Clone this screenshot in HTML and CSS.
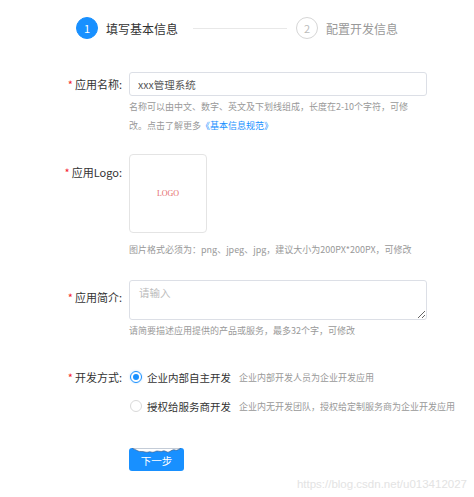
FILE: index.html
```html
<!DOCTYPE html>
<html lang="zh-CN">
  <head>
    <meta charset="UTF-8" />
    <meta name="viewport" content="width=device-width, initial-scale=1.0" />
    <title>创建应用</title>
    <link rel="stylesheet" href="styles.css">
  </head>
  <body>
    <div class="steps">
      <span class="step-num active">1</span>
      <span class="step-title active">填写基本信息</span>
      <span class="step-line"></span>
      <span class="step-num">2</span>
      <span class="step-title">配置开发信息</span>
    </div>

    <form class="app-form">
      <div class="form-row">
        <label class="form-label"><i class="req">*</i>应用名称:</label>
        <div class="form-body">
          <input class="text-input" type="text" value="xxx管理系统" />
          <p class="help help-name">
            名称可以由中文、数字、英文及下划线组成，长度在2-10个字符，可修改。点击了解更多<a href="#" class="link">《基本信息规范》</a>
          </p>
        </div>
      </div>

      <div class="form-row row-logo">
        <label class="form-label label-logo"><i class="req">*</i>应用Logo:</label>
        <div class="form-body">
          <div class="logo-box"><span class="logo-text">LOGO</span></div>
          <p class="help help-logo">图片格式必须为：png、jpeg、jpg，建议大小为200PX*200PX，可修改</p>
        </div>
      </div>

      <div class="form-row row-desc">
        <label class="form-label label-desc"><i class="req">*</i>应用简介:</label>
        <div class="form-body">
          <textarea class="text-area" placeholder="请输入"></textarea>
          <p class="help">请简要描述应用提供的产品或服务，最多32个字，可修改</p>
        </div>
      </div>

      <div class="form-row row-radio">
        <label class="form-label"><i class="req">*</i>开发方式:</label>
        <div class="form-body">
          <div class="radio-row">
            <span class="radio checked"></span>
            <span class="radio-text">企业内部自主开发</span>
            <span class="radio-desc">企业内部开发人员为企业开发应用</span>
          </div>
          <div class="radio-row second">
            <span class="radio"></span>
            <span class="radio-text">授权给服务商开发</span>
            <span class="radio-desc">企业内无开发团队，授权给定制服务商为企业开发应用</span>
          </div>
        </div>
      </div>

      <div class="actions">
        <button type="button" class="next-btn">
          <svg class="btn-tear" width="55" height="6" viewBox="0 0 55 6">
            <path d="M4 0 H51 V1 C49 1 48 3 46 2 C44 1 42 3 40 4 C38 5 36 2 34 3 C32 4 30 3 28 3 C26 3 25 5 22 4 C20 3 19 5 16 4 C13 3 11 4 9 3 C7 2 6 1 4 1 Z" fill="#fff" stroke="#3b5478" stroke-width="0.6" />
          </svg>
          下一步
        </button>
      </div>
    </form>

    <div class="watermark">https://blog.csdn.net/u013412027</div>
  </body>
</html>
```

FILE: styles.css
```css
body {
  margin: 0;
  font-family: "Noto Sans CJK SC", "Noto Sans", sans-serif;
  color: #333;
  background: #fff;
}
.steps {
  display: flex;
  align-items: center;
  margin-top: 17px;
  padding-left: 76px;
  height: 22px;
}
.step-num {
  width: 20px;
  height: 20px;
  border: 1px solid #d6d6d6;
  border-radius: 50%;
  display: flex;
  align-items: center;
  justify-content: center;
  font-size: 11px;
  color: #bbb;
}
.step-num.active {
  background-color: #1890ff;
  border-color: #1890ff;
  color: #fff;
}
.step-title {
  margin-left: 8px;
  font-size: 12px;
  color: #999;
}
.step-title.active {
  color: #333;
}
.step-line {
  width: 94px;
  height: 1px;
  background-color: #e8e8e8;
  margin: 0 9px 0 15px;
}
.app-form {
  margin-top: 33px;
}
.form-row {
  display: flex;
  align-items: flex-start;
}
.form-label {
  width: 125px;
  flex-shrink: 0;
  padding-right: 3px;
  box-sizing: border-box;
  text-align: right;
  font-size: 11px;
  line-height: 24px;
  color: #333;
}
.req {
  font-style: normal;
  color: #f5222d;
  margin-right: 2px;
}
.form-body {
  width: 298px;
  margin-left: 4px;
}
.text-input {
  display: block;
  width: 100%;
  height: 24px;
  box-sizing: border-box;
  border: 1px solid #dcdfe6;
  border-radius: 3px;
  padding: 0 8px;
  font-family: inherit;
  font-size: 10.5px;
  color: #555;
  outline: none;
}
.help {
  margin: 2px 0 0;
  font-size: 9px;
  line-height: 18px;
  color: #999;
}
.help-name {
  max-width: 284px;
  margin-top: 1px;
  line-height: 19px;
}
.link {
  color: #1890ff;
  text-decoration: none;
}
.row-logo {
  margin-top: 19px;
}
.label-logo {
  padding-top: 6px;
}
.logo-box {
  width: 78px;
  height: 79px;
  box-sizing: border-box;
  border: 1px solid #e4e4e4;
  border-radius: 4px;
  display: flex;
  align-items: center;
  justify-content: center;
}
.logo-text {
  font-family: "Liberation Serif", serif;
  font-size: 8px;
  color: #e46b6b;
}
.help-logo {
  margin-top: 8px;
  white-space: nowrap;
}
.row-desc {
  margin-top: 21px;
}
.label-desc {
  padding-top: 5px;
}
.text-area {
  display: block;
  width: 100%;
  height: 40px;
  box-sizing: border-box;
  border: 1px solid #dcdfe6;
  border-radius: 3px;
  padding: 4px 9px;
  font-family: inherit;
  font-size: 10.5px;
  outline: none;
  resize: vertical;
}
.text-area::placeholder {
  color: #bbb;
}
.row-radio {
  margin-top: 25px;
}
.radio-row {
  display: flex;
  align-items: center;
  height: 24px;
  white-space: nowrap;
}
.radio-row.second {
  margin-top: 5px;
}
.radio {
  flex-shrink: 0;
  width: 12px;
  height: 12px;
  box-sizing: border-box;
  border: 1px solid #d9d9d9;
  border-radius: 50%;
  margin-left: 1px;
  display: flex;
  align-items: center;
  justify-content: center;
}
.radio.checked {
  border-color: #1890ff;
  box-shadow: 0 0 2px rgba(24, 144, 255, 0.35);
}
.radio.checked::after {
  content: "";
  width: 6px;
  height: 6px;
  border-radius: 50%;
  background-color: #1890ff;
}
.radio-text {
  flex-shrink: 0;
  margin-left: 5px;
  font-size: 10.5px;
  color: #333;
}
.radio-desc {
  flex-shrink: 0;
  margin-left: 8px;
  font-size: 9px;
  color: #999;
}
.actions {
  margin-top: 28px;
  padding-left: 129px;
}
.next-btn {
  position: relative;
  width: 55px;
  height: 23px;
  border: none;
  border-radius: 3px;
  background-color: #1890ff;
  color: #fff;
  font-family: inherit;
  font-size: 10.5px;
  padding: 2px 0 0;
  cursor: pointer;
}
.btn-tear {
  position: absolute;
  top: 0;
  left: 0;
}
.watermark {
  margin-top: 6px;
  padding-right: 7px;
  text-align: right;
  font-family: "Liberation Sans", Arial, sans-serif;
  font-size: 11.5px;
  line-height: 14px;
  color: #e3e3e3;
}
```
